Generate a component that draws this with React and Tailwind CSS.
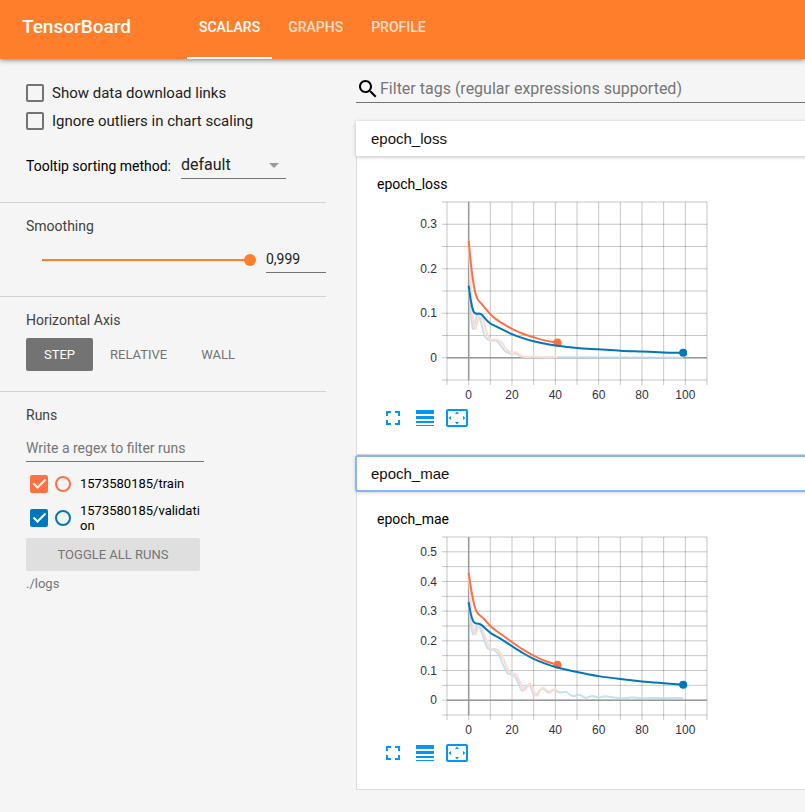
import { useState } from 'react';

const TRAIN = '#ff7043';
const VALIDATION = '#0077bb';

const runs = [
  { name: '1573580185/train', box: 'bg-[#ff7043]', ring: 'border-[#ff7043]' },
  { name: '1573580185/validation', box: 'bg-[#0077bb]', ring: 'border-[#0077bb]' },
];

const charts = [
  {
    tag: 'epoch_loss',
    min: -0.05,
    max: 0.35,
    labels: ['0.3', '0.2', '0.1', '0'],
    train: [[0, 0.262], [1, 0.213], [2, 0.174], [3, 0.147], [4, 0.133], [5, 0.126], [7, 0.115], [10, 0.098], [12, 0.089], [15, 0.079], [20, 0.065], [25, 0.054], [30, 0.046], [35, 0.039], [41, 0.034]],
    validation: [[0, 0.162], [1, 0.128], [2, 0.107], [3, 0.1], [5, 0.099], [6, 0.097], [8, 0.086], [10, 0.077], [15, 0.065], [20, 0.053], [25, 0.044], [30, 0.037], [35, 0.032], [41, 0.027], [50, 0.022], [60, 0.019], [70, 0.016], [80, 0.014], [90, 0.012], [99, 0.011]],
    rawTrain: [[0, 0.262], [1, 0.16], [2, 0.09], [3, 0.065], [4, 0.08], [5, 0.097], [6, 0.092], [7, 0.08], [8, 0.062], [9, 0.048], [10, 0.041], [13, 0.041], [15, 0.036], [17, 0.022], [19, 0.012], [22, 0.012], [24, 0.005], [26, 0.002], [30, 0.003], [35, 0.001], [41, 0.002]],
    rawValidation: [[0, 0.162], [1, 0.1], [2, 0.065], [3, 0.08], [4, 0.097], [5, 0.092], [6, 0.074], [7, 0.055], [8, 0.044], [10, 0.039], [13, 0.038], [15, 0.026], [17, 0.014], [19, 0.01], [22, 0.009], [24, 0.003], [28, 0.001], [40, 0.001], [99, 0]],
  },
  {
    tag: 'epoch_mae',
    focused: true,
    min: -0.05,
    max: 0.55,
    labels: ['0.5', '0.4', '0.3', '0.2', '0.1', '0'],
    train: [[0, 0.43], [1, 0.38], [2, 0.34], [3, 0.31], [4, 0.295], [5, 0.287], [7, 0.275], [10, 0.25], [12, 0.238], [15, 0.222], [20, 0.196], [25, 0.171], [30, 0.15], [35, 0.133], [41, 0.119]],
    validation: [[0, 0.33], [1, 0.29], [2, 0.268], [3, 0.26], [5, 0.257], [6, 0.253], [8, 0.24], [10, 0.227], [15, 0.206], [20, 0.182], [25, 0.159], [30, 0.139], [35, 0.124], [41, 0.11], [50, 0.095], [60, 0.081], [70, 0.071], [80, 0.063], [90, 0.057], [99, 0.052]],
    rawTrain: [[0, 0.43], [1, 0.32], [2, 0.25], [3, 0.222], [4, 0.238], [5, 0.255], [6, 0.245], [8, 0.205], [10, 0.175], [12, 0.173], [14, 0.165], [16, 0.14], [18, 0.105], [20, 0.09], [22, 0.086], [24, 0.055], [26, 0.034], [28, 0.054], [29, 0.052], [30, 0.034], [31, 0.016], [32, 0.019], [34, 0.042], [36, 0.034], [38, 0.027], [39.5, 0.037], [41, 0.033]],
    rawValidation: [[0, 0.33], [1, 0.26], [2, 0.222], [3, 0.235], [4, 0.252], [5, 0.248], [6, 0.228], [8, 0.186], [9, 0.174], [12, 0.168], [14, 0.152], [16, 0.118], [18, 0.09], [20, 0.088], [22, 0.072], [24, 0.038], [25, 0.032], [27, 0.05], [28.5, 0.046], [30, 0.018], [31.5, 0.02], [33, 0.034], [34.5, 0.038], [37, 0.025], [39, 0.035], [42, 0.026], [45, 0.028], [48, 0.014], [51, 0.018], [54, 0.008], [57, 0.014], [60, 0.009], [63, 0.013], [67, 0.009], [71, 0.006], [75, 0.009], [79, 0.007], [85, 0.007], [99, 0.007]],
  },
];

const tools = [
  {
    label: 'Toggle full size',
    d: 'M7 14H5v5h5v-2H7v-3zm-2-4h2V7h3V5H5v5zm12 7h-3v2h5v-5h-2v3zM14 5v2h3v3h2V5h-5z',
  },
  {
    label: 'Toggle y-axis log scale',
    d: 'M3 17h18v-2H3v2zm0 3h18v-1H3v1zm0-7h18v-3H3v3zm0-9v4h18V4H3z',
  },
  {
    label: 'Fit domain to data',
    d: 'M12.01 5.5L10 8h4l-1.99-2.5zM18 10v4l2.5-1.99L18 10zM6 10l-2.5 2.01L6 14v-4zm8 6h-4l2.01 2.5L14 16zm7-13H3c-1.1 0-2 .9-2 2v14c0 1.1.9 2 2 2h18c1.1 0 2-.9 2-2V5c0-1.1-.9-2-2-2zm0 16.01H3V4.99h18v14.02z',
  },
];

// plot box inside the chart svg
const LEFT = 70;
const RIGHT = 330;
const TOP = 6;
const BOTTOM = 184;

const scaleX = (v) => LEFT + ((v + 10) / 120) * (RIGHT - LEFT);

// Catmull-Rom through the points, written as cubic beziers
function toPath(points) {
  let d = `M${points[0][0]} ${points[0][1]}`;
  for (let i = 0; i < points.length - 1; i++) {
    const p0 = points[i - 1] || points[i];
    const p1 = points[i];
    const p2 = points[i + 1];
    const p3 = points[i + 2] || p2;
    const w = p2[0] - p1[0];
    const s1 = (p2[1] - p0[1]) / (p2[0] - p0[0]);
    const s2 = (p3[1] - p1[1]) / (p3[0] - p1[0]);
    d += `C${p1[0] + w / 3} ${p1[1] + (s1 * w) / 3} ${p2[0] - w / 3} ${p2[1] - (s2 * w) / 3} ${p2[0]} ${p2[1]}`;
  }
  return d;
}

function LineChart({ chart }) {
  const scaleY = (v) => BOTTOM - ((v - chart.min) / (chart.max - chart.min)) * (BOTTOM - TOP);
  const line = (data) => toPath(data.map(([x, y]) => [scaleX(x), scaleY(y)]));
  const rows = Math.round((chart.max - chart.min) / 0.05);
  const end = (data) => data[data.length - 1];
  const trainEnd = end(chart.train);
  const validationEnd = end(chart.validation);

  return (
    <svg width="340" height="208" viewBox="0 0 340 208" role="img" aria-label={chart.tag} className="block">
      <g stroke="#000" strokeOpacity="0.22">
        {Array.from({ length: 13 }, (_, i) => scaleX(i * 10 - 10)).map((x) => (
          <line key={x} x1={x} x2={x} y1={TOP} y2={BOTTOM + 5} />
        ))}
        {Array.from({ length: rows + 1 }, (_, i) => scaleY(chart.min + i * 0.05)).map((y) => (
          <line key={y} x1={LEFT - 5} x2={RIGHT} y1={y} y2={y} />
        ))}
      </g>
      <g stroke="#999" strokeWidth="1.5">
        <line x1={scaleX(0)} x2={scaleX(0)} y1={TOP} y2={BOTTOM} />
        <line x1={LEFT} x2={RIGHT} y1={scaleY(0)} y2={scaleY(0)} />
      </g>
      <g fill="none" strokeWidth="2">
        <path d={line(chart.rawValidation)} stroke="#bfdeef" strokeOpacity="0.9" />
        <path d={line(chart.rawTrain)} stroke="#ffdbd0" />
        <path d={line(chart.train)} stroke={TRAIN} />
      </g>
      <circle cx={scaleX(trainEnd[0])} cy={scaleY(trainEnd[1])} r="4" fill={TRAIN} />
      <path d={line(chart.validation)} fill="none" stroke={VALIDATION} strokeWidth="2" />
      <circle cx={scaleX(validationEnd[0])} cy={scaleY(validationEnd[1])} r="4" fill={VALIDATION} />
      <g className="font-['Liberation_Sans',sans-serif] text-[12px]" fill="#32313f">
        {chart.labels.map((label) => (
          <text key={label} x="60" y={scaleY(Number(label)) + 4} textAnchor="end">
            {label}
          </text>
        ))}
        {[0, 20, 40, 60, 80, 100].map((v) => (
          <text key={v} x={scaleX(v)} y="203" textAnchor="middle">
            {v}
          </text>
        ))}
      </g>
    </svg>
  );
}

function Checkbox({ label }) {
  return (
    <label className="flex h-[18px] items-center gap-2 text-[15px] text-[#212121]">
      <input
        type="checkbox"
        className="size-[18px] shrink-0 appearance-none rounded-xs border-2 border-[#737373]"
      />
      {label}
    </label>
  );
}

function Run({ run, active, onToggle }) {
  return (
    <div className="flex min-h-[34px] items-center pl-1">
      <span className="relative mr-[7px] size-[18px] shrink-0">
        <input
          type="checkbox"
          id={run.name}
          checked={active}
          onChange={onToggle}
          className={`block size-[18px] appearance-none rounded-xs ${run.box}`}
        />
        <svg
          viewBox="0 0 18 18"
          fill="none"
          stroke="#fff"
          strokeWidth="2"
          className="pointer-events-none absolute inset-0"
        >
          <path d="M3.5 8.5l4 4L15.5 4.5" />
        </svg>
      </span>
      <input
        type="radio"
        name="isolate"
        aria-label={`Isolate ${run.name}`}
        className={`mr-[9px] size-4 shrink-0 appearance-none rounded-full border-2 ${run.ring}`}
      />
      <label htmlFor={run.name} className="w-[121px] pb-px text-[13px] leading-[15px] break-all text-black">
        {run.name}
      </label>
    </div>
  );
}

function Category({ chart }) {
  return (
    <section className="mb-px">
      <button
        className={`relative block h-[35px] w-full bg-white pt-px pl-[15px] text-left font-['Liberation_Sans',sans-serif] text-[15px] text-[#111] shadow-[0_1px_4px_rgba(0,0,0,0.25)] ${
          chart.focused ? 'rounded-xs outline-2 -outline-offset-1 outline-[#8ab4f8]' : ''
        }`}
      >
        {chart.tag}
      </button>
      <div className="h-[299px] border-b border-l border-[#dcdcdc] bg-white pt-[18px] pl-5">
        <h3 className="mb-[2px] text-sm text-black">{chart.tag}</h3>
        <LineChart chart={chart} />
        <div className="mt-[2px] flex gap-2 pl-1">
          {tools.map((tool) => (
            <button key={tool.label} aria-label={tool.label} className="size-6">
              <svg viewBox="0 0 24 24" fill="#0396f3" className="size-6">
                <path d={tool.d} />
              </svg>
            </button>
          ))}
        </div>
      </div>
    </section>
  );
}

export default function App() {
  const [active, setActive] = useState([true, true]);
  const [smoothing, setSmoothing] = useState(0.999);
  const [axis, setAxis] = useState('STEP');

  const toggle = (i) => setActive(active.map((on, j) => (i === j ? !on : on)));

  return (
    <div className="flex min-h-screen flex-col overflow-x-hidden bg-[#f5f5f5] font-[Roboto,sans-serif]">
      <header className="relative z-10 flex h-[59px] items-stretch bg-[#ff7e2b] pl-[22px] text-white shadow-[0_1px_5px_rgba(0,0,0,0.5)]">
        <h1 className="w-[165px] pt-[13px] text-[19px] leading-7 font-medium">TensorBoard</h1>
        <nav className="flex gap-1 text-sm font-medium">
          <a href="#scalars" className="border-b-2 border-white px-3 pt-[17px]">
            SCALARS
          </a>
          <a href="#graphs" className="px-3 pt-[17px] text-white/75">
            GRAPHS
          </a>
          <a href="#profile" className="px-3 pt-[17px] text-white/75">
            PROFILE
          </a>
        </nav>
      </header>

      <div className="flex flex-1">
        <aside className="w-[326px] shrink-0">
          <div className="flex h-36 flex-col gap-[10px] border-b border-[#d2d2d2] pt-[25px] pl-[26px]">
            <Checkbox label="Show data download links" />
            <Checkbox label="Ignore outliers in chart scaling" />
            <div className="mt-3 flex items-center text-sm text-black">
              <label htmlFor="sorting" className="mr-[10px]">
                Tooltip sorting method:
              </label>
              <span className="relative">
                <select
                  id="sorting"
                  className="h-[27px] w-[105px] appearance-none border-b border-[#737373] text-base text-[#212121]"
                >
                  <option>default</option>
                </select>
                <svg
                  viewBox="0 0 10 5"
                  fill="#9a9a9a"
                  className="pointer-events-none absolute top-[11px] right-[7px] h-[5px] w-[10px]"
                >
                  <path d="M0 0h10L5 5z" />
                </svg>
              </span>
            </div>
          </div>

          <div className="h-[94px] border-b border-[#d2d2d2] pt-[13px] pl-[26px] text-sm text-[#424242]">
            <label htmlFor="smoothing">Smoothing</label>
            <div className="mt-[11px] flex items-center pl-4">
              <input
                id="smoothing"
                type="range"
                min="0"
                max="0.999"
                step="0.001"
                value={smoothing}
                onChange={(e) => setSmoothing(Number(e.target.value))}
                className="h-3 min-w-0 flex-1 appearance-none bg-transparent [&::-webkit-slider-runnable-track]:h-[2px] [&::-webkit-slider-runnable-track]:bg-[#ff7e2b] [&::-webkit-slider-thumb]:-mt-[5px] [&::-webkit-slider-thumb]:size-3 [&::-webkit-slider-thumb]:appearance-none [&::-webkit-slider-thumb]:rounded-full [&::-webkit-slider-thumb]:bg-[#ff7e2b]"
              />
              <input
                type="text"
                aria-label="Smoothing value"
                value={String(smoothing).replace('.', ',')}
                readOnly
                className="ml-[10px] h-[26px] w-[60px] border-b border-[#737373] pb-px text-[#212121]"
              />
            </div>
          </div>

          <div className="h-[95px] border-b border-[#d2d2d2] pt-[13px] pl-[26px] text-[#424242]">
            <h2 className="text-sm">Horizontal Axis</h2>
            <div className="mt-2 flex text-[13px]">
              {['STEP', 'RELATIVE', 'WALL'].map((name) => (
                <button
                  key={name}
                  onClick={() => setAxis(name)}
                  className={`h-[33px] rounded-xs px-[17px] first:px-[18px] ${
                    axis === name ? 'bg-[#737373] text-white' : 'text-[#737373]'
                  }`}
                >
                  {name}
                </button>
              ))}
            </div>
          </div>

          <div className="pt-[13px] pl-[26px]">
            <h2 className="text-sm text-[#424242]">Runs</h2>
            <input
              type="text"
              aria-label="Filter runs"
              placeholder="Write a regex to filter runs"
              className="mt-[10px] mb-[5px] block h-[27px] w-[178px] border-b border-[#737373] text-sm placeholder:text-[#757575]"
            />
            {runs.map((run, i) => (
              <Run key={run.name} run={run} active={active[i]} onToggle={() => toggle(i)} />
            ))}
            <button
              onClick={() => setActive(active.map((on) => !on))}
              className="mt-[3px] block h-[33px] w-[174px] rounded-xs bg-[#dfdfdf] text-[13px] text-[#757575]"
            >
              TOGGLE ALL RUNS
            </button>
            <div className="mt-[3px] text-[13px] text-[#757575]">./logs</div>
          </div>
        </aside>

        <main className="-mr-2 min-w-0 flex-1 pl-[30px]">
          <label className="mt-[15px] mb-[18px] flex h-[29px] items-center border-b border-[#737373] pt-px">
            <svg viewBox="0 0 24 24" className="size-6 shrink-0">
              <path d="M15.5 14h-.79l-.28-.27C15.41 12.59 16 11.11 16 9.5 16 5.91 13.09 3 9.5 3S3 5.91 3 9.5 5.91 16 9.5 16c1.61 0 3.09-.59 4.23-1.57l.27.28v.79l5 4.99L20.49 19l-4.99-5zm-6 0C7.01 14 5 11.99 5 9.5S7.01 5 9.5 5 14 7.01 14 9.5 11.99 14 9.5 14z" />
            </svg>
            <input
              type="text"
              aria-label="Filter tags"
              placeholder="Filter tags (regular expressions supported)"
              className="min-w-0 flex-1 text-base placeholder:text-[#757575]"
            />
          </label>
          {charts.map((chart) => (
            <Category key={chart.tag} chart={chart} />
          ))}
        </main>
      </div>
    </div>
  );
}
